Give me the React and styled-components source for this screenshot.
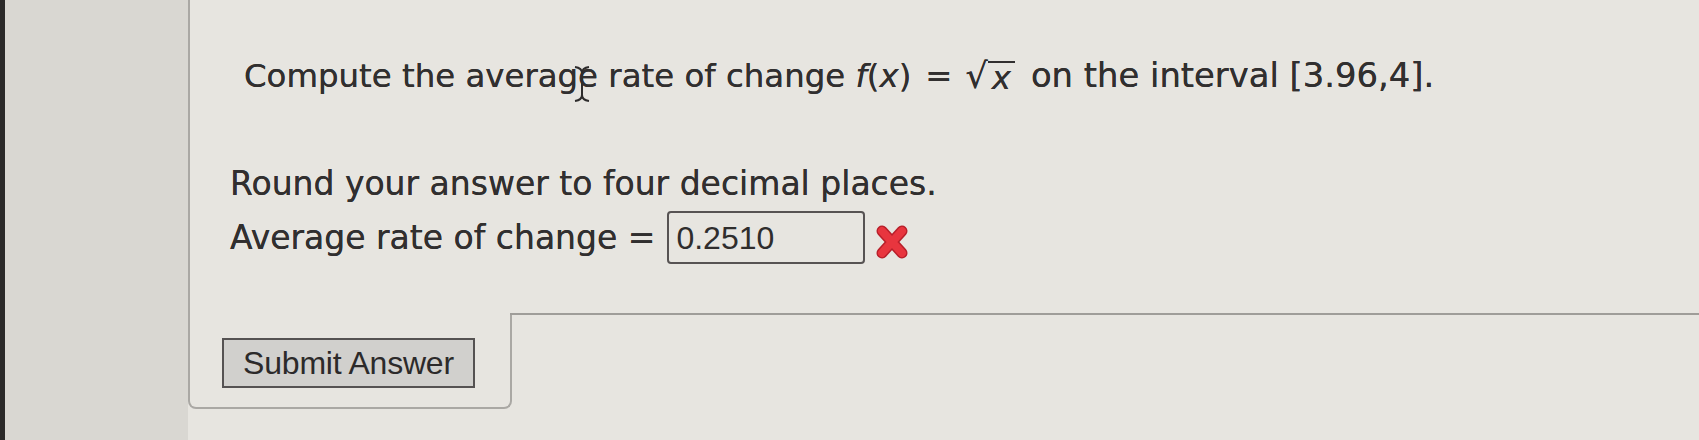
import React from "react";
import styled, { createGlobalStyle } from "styled-components";

const Global = createGlobalStyle`
  html, body { margin: 0; padding: 0; }
  body {
    background: #e6e4df;
    font-family: "DejaVu Sans", Verdana, sans-serif;
    color: #312f2f;
    overflow: hidden;
  }
`;

const Page = styled.div`
  display: flex;
  width: 1699px;
  height: 440px;
  background: #e7e5e0;
`;

const Sidebar = styled.div`
  width: 183px;
  flex: none;
  background: #d9d7d2;
  border-left: 5px solid #2b2a29;
`;

const Main = styled.div`
  flex: 1;
  display: flex;
  flex-direction: column;
`;

const QuestionArea = styled.div`
  height: 313px;
  box-sizing: border-box;
  border-left: 2px solid #aaa8a4;
  padding: 54px 0 0 40px;
  position: relative;
`;

const Line = styled.div`
  font-size: ${(p) => p.$size || 33}px;
  line-height: 44px;
  white-space: nowrap;
  margin-left: ${(p) => p.$indent || 0}px;
  margin-top: ${(p) => p.$top || 0}px;
  display: flex;
  align-items: center;
  text-shadow: 0 0 0.6px #312f2f;
`;

const Ital = styled.span`
  font-style: italic;
`;

const Op = styled.span`
  margin: 0 13px 0 14px;
`;

const Radical = styled.span`
  display: inline-flex;
  align-items: flex-end;
  margin-right: 16px;
`;

const RadicalSign = styled.span`
  font-size: 35px;
`;

const Radicand = styled.span`
  font-style: italic;
  border-top: 2px solid #312f2f;
  line-height: 31px;
  padding: 0 4px;
  margin-bottom: 4px;
`;

const Tail = styled.span`
  font-size: 33.8px;
`;

const AnswerBox = styled.div`
  width: 198px;
  height: 53px;
  box-sizing: border-box;
  margin-left: 12px;
  border: 2px solid #575353;
  border-radius: 4px;
  font-family: "Liberation Sans", Arial, sans-serif;
  font-size: 32px;
  display: flex;
  align-items: center;
  padding-left: 7px;
  color: #2f2d2d;
  text-shadow: none;
`;

const WrongMark = styled.svg`
  margin-left: 11px;
  width: 32px;
  height: 36px;
  margin-top: 8px;
`;

const Cursor = styled.svg`
  position: absolute;
  left: 380px;
  top: 64px;
  width: 24px;
  height: 40px;
`;

const BottomRow = styled.div`
  display: flex;
  height: 96px;
`;

const ButtonBox = styled.div`
  width: 324px;
  box-sizing: border-box;
  border-left: 2px solid #aaa8a4;
  border-right: 2px solid #aaa8a4;
  border-bottom: 2px solid #aaa8a4;
  border-radius: 0 0 8px 8px;
  padding: 25px 0 0 32px;
`;

const Filler = styled.div`
  flex: 1;
  border-top: 2px solid #9f9d99;
  margin-left: -2px;
`;

const SubmitButton = styled.button`
  width: 253px;
  height: 50px;
  box-sizing: border-box;
  background: #d1d0cd;
  border: 2px solid #555252;
  font-family: "Liberation Sans", Arial, sans-serif;
  font-size: 32px;
  letter-spacing: -0.2px;
  color: #2c2a2a;
  padding: 0;
`;

export default function App() {
  return (
    <>
      <Global />
      <Page>
        <Sidebar />
        <Main>
          <QuestionArea>
            <Line $indent={14} $size={32.4}>
              Compute the average rate of change&nbsp;<Ital>f</Ital>(<Ital>x</Ital>)
              <Op>=</Op>
              <Radical>
                <RadicalSign>√</RadicalSign>
                <Radicand>x</Radicand>
              </Radical>
              <Tail>on the interval [3.96,4].</Tail>
            </Line>
            <Line $top={64}>Round your answer to four decimal places.</Line>
            <Line $top={5}>
              Average rate of change =
              <AnswerBox>0.2510</AnswerBox>
              <WrongMark viewBox="0 0 32 34">
                <path d="M6 6 L26 28 M26 6 L6 28" stroke="#b81f2a" strokeWidth="11" strokeLinecap="round" />
                <path d="M6 6 L26 28 M26 6 L6 28" stroke="#e8353e" strokeWidth="8" strokeLinecap="round" />
              </WrongMark>
            </Line>
            <Cursor viewBox="0 0 24 40">
              <path
                d="M5 3 Q12 4 12 9 Q12 4 19 3 M12 9 V31 M5 37 Q12 36 12 31 Q12 36 19 37"
                stroke="#2e2c2c"
                strokeWidth="2"
                fill="none"
              />
            </Cursor>
          </QuestionArea>
          <BottomRow>
            <ButtonBox>
              <SubmitButton>Submit Answer</SubmitButton>
            </ButtonBox>
            <Filler />
          </BottomRow>
        </Main>
      </Page>
    </>
  );
}
